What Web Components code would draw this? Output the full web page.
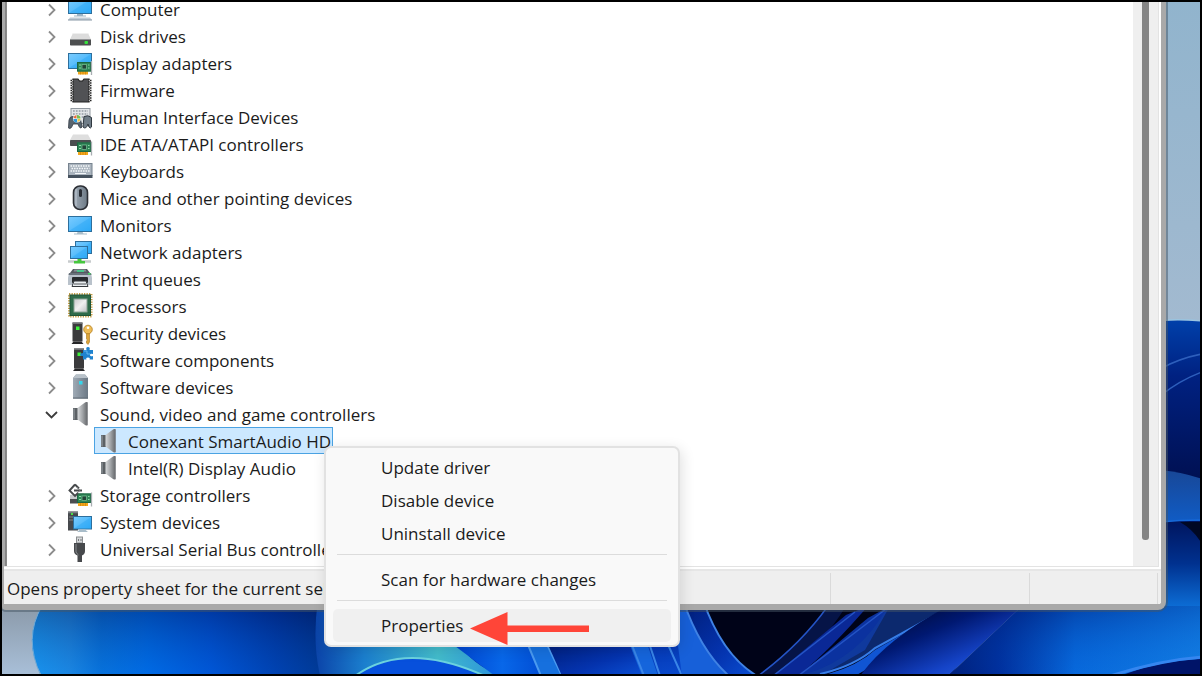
<!DOCTYPE html>
<html lang="en">
<head>
<meta charset="utf-8">
<title>Device Manager</title>
<style>
    body {
        margin: 0;
        font-family: "Open Sans", "Noto Sans", sans-serif;
        font-size: 17px;
        color: #1b1b1b;
    }
</style>
</head>
<body>
<desk-top>
    <desk-wallpaper slot="wallpaper"></desk-wallpaper>
    <app-window>
        <device-tree>
            <device-node icon="computer">Computer</device-node>
            <device-node icon="disk">Disk drives</device-node>
            <device-node icon="display">Display adapters</device-node>
            <device-node icon="firmware">Firmware</device-node>
            <device-node icon="hid">Human Interface Devices</device-node>
            <device-node icon="ide">IDE ATA/ATAPI controllers</device-node>
            <device-node icon="keyboard">Keyboards</device-node>
            <device-node icon="mouse">Mice and other pointing devices</device-node>
            <device-node icon="monitor">Monitors</device-node>
            <device-node icon="network">Network adapters</device-node>
            <device-node icon="printer">Print queues</device-node>
            <device-node icon="processor">Processors</device-node>
            <device-node icon="security">Security devices</device-node>
            <device-node icon="component">Software components</device-node>
            <device-node icon="software">Software devices</device-node>
            <device-node icon="sound" open>Sound, video and game controllers</device-node>
            <device-node icon="sound" child selected>Conexant SmartAudio HD</device-node>
            <device-node icon="sound" child>Intel(R) Display Audio</device-node>
            <device-node icon="storage">Storage controllers</device-node>
            <device-node icon="system">System devices</device-node>
            <device-node icon="usb">Universal Serial Bus controllers</device-node>
        </device-tree>
        <status-bar slot="status">Opens property sheet for the current selection.</status-bar>
    </app-window>
    <context-menu slot="menu">
        <menu-item>Update driver</menu-item>
        <menu-item>Disable device</menu-item>
        <menu-item>Uninstall device</menu-item>
        <menu-separator></menu-separator>
        <menu-item>Scan for hardware changes</menu-item>
        <menu-separator></menu-separator>
        <menu-item active>Properties<pointer-arrow slot="after"></pointer-arrow></menu-item>
    </context-menu>
</desk-top>

<script>
// Shared pieces of the device icons. Every icon is drawn on a 24 x 27 grid.
const screen = (x, y, w, h) => `
    <rect x="${x + .5}" y="${y + .5}" width="${w - 1}" height="${h - 1}" fill="url(#scr)" stroke="#2d6f9d"/>
    <path d="M${x + 1} ${y + h - 1}L${x + w - 1} ${y + 1}V${y + h - 1}Z" fill="#20a0f4" opacity=".35"/>`;

const board = (y) => `
    <path d="M10 ${y + 9}h10v3.500h-10z" fill="#f3a71c"/>
    <path d="M12.500 ${y + 9}v3.500M15 ${y + 9}v3.500M17.500 ${y + 9}v3.500" stroke="#c97c08" stroke-width=".6"/>
    <rect x="9" y="${y}" width="14" height="9.500" fill="#2f8557"/>
    <rect x="9.500" y="${y + .5}" width="13" height="8.500" fill="none" stroke="#1c6842"/>
    <rect x="14" y="${y + 2.5}" width="4.500" height="4.500" fill="#234237" stroke="#78c596" stroke-width=".7"/>
    <path d="M11 ${y + 3}h2M11 ${y + 6}h2M20 ${y + 3}h1.500M20 ${y + 6}h1.500" stroke="#8ddca5"/>
    <path d="M23.500 ${y - 1}v14" stroke="#a9aeb2" stroke-width="1.300"/>`;

const tower = (x, y, w, h) => `
    <rect x="${x}" y="${y}" width="${w}" height="${h}" fill="#3b3b3d"/>
    <path d="M${x} ${y + .7}h${w}" stroke="#77797c" stroke-width="1.400"/>
    <path d="M${x + 1} ${y + h}h${w - 2}l2 2.500h${-w - 2}z" fill="#262628"/>
    <rect x="${x + w / 2 - 1.5}" y="${y + 4}" width="3.500" height="3.500" fill="#3cf03a"/>`;

const dots = (n, fn) => Array.from({ length: n }, (_, i) => fn(i)).join('');

const ICONS = {
    computer: `
        ${screen(0, 3, 24, 16)}
        <path d="M9 19h6v1.500h3v1H6v-1h3z" fill="#9db4c4"/>
        <path d="M2 22.500h20l2 2.500H0z" fill="#c0ccd6"/><path d="M0 25h24" stroke="#8898a6"/>`,
    disk: `
        <path d="M5 11h15l3 6.500H2z" fill="#dcdcdc"/>
        <path d="M5 11h15l.5 1H4.500z" fill="#efefef"/>
        <rect x="2" y="17" width="21" height="6.500" rx=".8" fill="#4d4f50"/>
        <path d="M2 17.500h21" stroke="#929495"/>
        <rect x="16.500" y="19" width="3.500" height="3" rx="1" fill="#36e23c"/>`,
    display: `${screen(0, 4, 24, 16)}${board(13)}`,
    firmware: `
        <path d="M5 3h5l1.500 2h3L16 3h5v23H5z" fill="#515255" stroke="#222" stroke-width="1.200"/>
        ${dots(9, i => `<path d="M2.500 ${4.500 + i * 2.5}h3M20.500 ${4.500 + i * 2.5}h3" stroke="#222" stroke-width="1.500"/>
        <path d="M4 ${4.500 + i * 2.5}h1.200M20.800 ${4.500 + i * 2.5}h1.200" stroke="#eee" stroke-width=".8"/>`)}`,
    hid: `
        <rect x="3" y="5.500" width="19" height="15" fill="#e3e6e9" stroke="#9299a0"/>
        <path d="M5 8h15M5 11h15M5 14h15" stroke="#929aa2" stroke-width="1.500" stroke-dasharray="1.700 1.200"/>
        <path d="M1 17q1-4 4-3.500h5q2 0 3 5l1 5.500q-2 3-4-3H5Q3 27 .5 25z" fill="#59656f" stroke="#323a42" stroke-width=".8"/>
        <path d="M16 13.500q4-2 7.500 1V24q-1 2-2.500 0l-1-3q-2 6-5 3z" fill="#707d88" stroke="#303840"/>
        <circle cx="9" cy="15.500" r="4" fill="#eef3f5"/>
        <path d="M5.500 15a3.500 3.500 0 0 1 3-3v3.500z" fill="#ec6a3c"/>
        <path d="M9 12a3.500 3.500 0 0 1 3.500 3.500H9z" fill="#76bd4c"/>
        <path d="M5.500 16H9v3.500A3.500 3.500 0 0 1 5.500 16z" fill="#2999df"/>
        <path d="M9.500 16h3A3.500 3.500 0 0 1 9.500 19z" fill="#f1c545"/>`,
    ide: `
        <path d="M5 4.500h15l3 5.500H2z" fill="#dedede"/>
        <rect x="2" y="10" width="21" height="6" rx=".8" fill="#4b4e50"/>
        ${board(12.5)}`,
    keyboard: `
        <rect x=".5" y="6.500" width="23.500" height="12" fill="#aab4be" stroke="#77838f"/>
        <path d="M2.500 9h20M3.500 11.500h18M2.500 14h20" stroke="#f4f7f9" stroke-width="1.600" stroke-dasharray="1.600 .9"/>
        <path d="M7 16.500h11" stroke="#f4f7f9"/>
        <rect y="18" width="24.500" height="3" fill="#46525e"/>`,
    mouse: `
        <rect x="5.500" y="2" width="14" height="23.500" rx="6.500" fill="url(#steel)" stroke="#2c2f35" stroke-width="1.600"/>
        <path d="M8 5v17" stroke="#c6ced9" stroke-width="1.500" opacity=".6"/>
        <rect x="11" y="5" width="3" height="8" rx="1.500" fill="#292d34"/>`,
    monitor: `
        ${screen(0, 5, 24, 16)}
        <path d="M9.500 21h5l1 1.500H19v1H6v-1h3z" fill="#a9bdca"/>`,
    network: `
        ${screen(7, 3, 17, 13)}
        ${screen(2, 8, 18, 13)}
        <path d="M0 23.500h23" stroke="#c7cbcd" stroke-width="2.500"/>
        <path d="M9.500 21h4v2H17v2.500H6V23h3.500z" fill="#46c63f"/>`,
    printer: `
        <path d="M5 4h14l3 4H2z" fill="#555a60"/>
        <path d="M6.500 4.500h11l1 2h-13z" fill="#8a9198"/>
        <path d="M9 6h7" stroke="#3dd98c" stroke-width="1.600"/>
        <path d="M1 8h22l1 5v7H0v-7z" fill="#b9c2cb"/>
        <path d="M1 8h22l.5 2H.5z" fill="#69727b"/>
        <rect x="20" y="8" width="2.500" height="1.500" fill="#40df60"/>
        <rect x="4" y="12" width="16" height="6" rx="1" fill="#282b2e"/>
        <path d="M6 16h12l2 5.500H4z" fill="#e9edf0" stroke="#34383c"/>
        <path d="M6 19h12" stroke="#54585c"/>`,
    processor: `
        <rect x="1" y="2" width="22.500" height="22.500" fill="none" stroke="#c49b43" stroke-width="2" stroke-dasharray="1.300 1.200"/>
        <rect x="2" y="3" width="20.500" height="20.500" fill="#2f6b4a" stroke="#205437"/>
        <rect x="6" y="7" width="13" height="13" fill="url(#metal)" stroke="#8ea597"/>`,
    security: `
        ${tower(4.5, 3.5, 10, 19)}
        <path d="M18.500 14h3v9l-1.500 2.500-1.500-1.500v-2l1-1-1-1z" fill="#dda53a" stroke="#a8741b" stroke-width=".6"/>
        <circle cx="20" cy="10.500" r="4.300" fill="#efbd57" stroke="#b37f21" stroke-width=".8"/>
        <circle cx="20" cy="8.800" r="1.300" fill="#fff"/>`,
    component: `
        ${tower(6, 2.5, 10, 20)}
        <path d="M15 4h3.500q-1-3 1.500-3t1.500 3H25v4q-3-1-3 1t3 1v3.500h-3.500q1-2-1.500-2t-1.500 2H15V10q-3 0-3-1.500T15 7z" fill="#1f83cf"/>
        <path d="M16 5h3v3h3" fill="none" stroke="#62b7ee"/>`,
    software: `
        <path d="M8 1.500h9L20 5v20.500H5V5z" fill="#8b96a0"/>
        <path d="M8 1.500h9L20 5H5z" fill="#b8c1c9"/>
        <rect x="5" y="5" width="15" height="20.500" fill="url(#steel)"/>
        <rect x="11" y="8" width="3.500" height="3.500" fill="#35d6ec"/>
        <path d="M5 25h15" stroke="#626d77"/>`,
    sound: `
        <rect x="5" y="8" width="5" height="12" fill="#5c6165"/>
        <path d="M6 8.500v11" stroke="#93999e" stroke-width="1.200"/>
        <path d="M9.500 8L17 2.500h2.500V25H17l-7.500-5.500z" fill="url(#cone)"/>
        <path d="M17.500 2q2.500 11.500 0 23.500h2V2z" fill="#737579"/>`,
    storage: `
        <path d="M2 14l14-2v10H2z" fill="#c7cacc"/>
        <path d="M2 18h10v4.500H2z" fill="#4b4e50"/>
        ${board(12.5)}
        <path d="M7 3.500L1.500 9.500 7 15l3-3M7 3.500l4 4M6 9.500h8" fill="none" stroke="#46494b" stroke-width="1.900"/>
        <path d="M9 6l3 3.500L9 12" fill="none" stroke="#76797b"/>`,
    system: `
        <rect x="0" y="3.500" width="10" height="19" fill="#46494d"/>
        <path d="M0 4.500h10" stroke="#787c80" stroke-width="1.500"/>
        <path d="M1 9h5M1 12h5" stroke="#818589"/>
        <rect x="3" y="5" width="2" height="2" fill="#4bdf45"/>
        ${screen(5, 8, 19, 13.5)}
        <path d="M12 21.500h5l3 2.500H9z" fill="#a9bdca"/>`,
    usb: `
        <rect x="8.500" y="2" width="6" height="6" fill="#d5d7d9" stroke="#8a8d90"/>
        <path d="M10 5h1M12.500 5h1" stroke="#55585a" stroke-width="1.500"/>
        <path d="M6 8h11v8q0 3-3 4.500V27h-4.500v-6.500Q6 19 6 16z" fill="#47494c"/>
        <path d="M8 9v8q1 2 2.500 3" fill="none" stroke="#888b8e"/>`
};

class DeviceIcon extends HTMLElement {
    static observedAttributes = ['name'];

    constructor() {
        super();
        this.attachShadow({ mode: 'open' });
    }

    attributeChangedCallback() {
        this.shadowRoot.innerHTML = `
            <style>
                :host { display: block; flex: none; width: 24px; height: 27px; }
                svg { display: block; overflow: visible; }
            </style>
            <svg width="24" height="27" viewBox="0 0 24 27" aria-hidden="true">
                <defs>
                    <linearGradient id="scr" x2="1" y2="1"><stop stop-color="#7cccff"/><stop offset="1" stop-color="#32adf8"/></linearGradient>
                    <linearGradient id="steel"><stop stop-color="#a0abb6"/><stop offset="1" stop-color="#6c7985"/></linearGradient>
                    <linearGradient id="metal" x2="1" y2="1"><stop stop-color="#c6c8ca"/><stop offset=".5" stop-color="#f0f0f0"/><stop offset="1" stop-color="#bfc2c4"/></linearGradient>
                    <linearGradient id="cone"><stop stop-color="#d8dadc"/><stop offset=".5" stop-color="#a2a5a8"/><stop offset="1" stop-color="#64676a"/></linearGradient>
                </defs>
                ${ICONS[this.getAttribute('name')] || ''}
            </svg>
        `;
    }
}

class DeviceNode extends HTMLElement {
    constructor() {
        super();
        this.attachShadow({ mode: 'open' });
        this.shadowRoot.innerHTML = `
            <style>
                :host { display: flex; height: 27px; padding-left: 33px; }
                :host([child]) { padding-left: 87px; }
                button {
                    width: 24px;
                    height: 27px;
                    margin-right: 2px;
                    padding: 0;
                    border: 0;
                    background: none;
                    color: #8c8c8c;
                }
                :host([open]) button { color: #3c3c3c; }
                :host([child]) button { display: none; }
                button svg { display: block; }
                .item {
                    display: flex;
                    gap: 8px;
                    padding: 0 2px;
                    line-height: 30px;
                    white-space: nowrap;
                }
                :host([selected]) .item {
                    background: #cce8ff;
                    box-shadow: inset 0 0 0 1px #4ba3e3;
                }
            </style>
            <button type="button" aria-label="Expand">
                <svg width="24" height="27" viewBox="0 0 24 27" fill="none" stroke="currentColor" stroke-width="1.800">
                    <path d="M9 9.500L14.500 15 9 20.500"/>
                </svg>
            </button>
            <div class="item"><device-icon></device-icon><span><slot></slot></span></div>
        `;
    }

    connectedCallback() {
        this.setAttribute('role', 'treeitem');
        this.shadowRoot.querySelector('device-icon').setAttribute('name', this.getAttribute('icon'));
        if (this.hasAttribute('open')) {
            this.shadowRoot.querySelector('button path').setAttribute('d', 'M6 12l5.500 5.500L17 12');
            this.shadowRoot.querySelector('button').setAttribute('aria-label', 'Collapse');
        }
    }
}

class DeviceTree extends HTMLElement {
    constructor() {
        super();
        this.attachShadow({ mode: 'open' });
        // scrolled down a little, so the first row is cut by the top edge
        this.shadowRoot.innerHTML = `
            <style>
                :host { display: block; margin-top: -7px; }
            </style>
            <div role="tree" aria-label="Devices"><slot></slot></div>
        `;
    }
}

class StatusBar extends HTMLElement {
    constructor() {
        super();
        this.attachShadow({ mode: 'open' });
        this.shadowRoot.innerHTML = `
            <style>
                :host {
                    display: grid;
                    grid-template-columns: 1fr 199px 128px;
                    height: 33px;
                    padding-right: 3px;
                    border-top: 2px solid #e6e6e6;
                    background: #efefef;
                    line-height: 32px;
                    white-space: nowrap;
                }
                div { border-right: 1px solid #dadada; margin-top: 2px; }
                .text { padding-left: 3px; }
            </style>
            <div class="text"><slot></slot></div><div></div><div></div>
        `;
    }
}

class AppWindow extends HTMLElement {
    constructor() {
        super();
        this.attachShadow({ mode: 'open' });
        this.shadowRoot.innerHTML = `
            <style>
                :host {
                    display: flex;
                    flex-direction: column;
                    border: solid #a9a9a9;
                    border-width: 0 5px 6px 2px;
                    border-radius: 0 0 8px 4px;
                    box-shadow: 0 0 0 2px rgba(70, 85, 100, .5);
                    background: #fff;
                    position: relative;
                    min-height: 0;
                    overflow: hidden;
                }
                .pane {
                    display: flex;
                    flex: 1;
                    min-height: 0;
                    margin-right: 2px;
                    border: solid #e3e3e3;
                    border-width: 0 1px 1px 0;
                    overflow: hidden;
                }
                .edge { width: 3px; background: linear-gradient(90deg, #bbb, #777 60%, #999); }
                .view { flex: 1; min-width: 0; }
                .scroll {
                    display: flex;
                    width: 24px;
                    justify-content: center;
                    padding-bottom: 26px;
                    padding-right: 1px;
                    background: #efefef;
                }
                .thumb { width: 7px; border-radius: 0 0 3px 3px; background: #858585; }
                ::slotted([slot=status]) { margin-top: 2px; }
            </style>
            <div class="pane">
                <div class="edge"></div>
                <div class="view"><slot></slot></div>
                <div class="scroll"><div class="thumb"></div></div>
            </div>
            <slot name="status"></slot>
        `;
    }
}

class MenuItem extends HTMLElement {
    constructor() {
        super();
        this.attachShadow({ mode: 'open' });
        this.shadowRoot.innerHTML = `
            <style>
                :host { display: block; }
                button {
                    display: flex;
                    gap: 7px;
                    width: 100%;
                    height: 33px;
                    padding: 0 0 0 48px;
                    border: 0;
                    border-radius: 5px;
                    background: none;
                    color: inherit;
                    font: inherit;
                    line-height: 34px;
                    text-align: left;
                    white-space: nowrap;
                }
                :host([active]) button { background: #f0f0f0; }
            </style>
            <button type="button" role="menuitem"><span><slot></slot></span><slot name="after"></slot></button>
        `;
    }
}

class MenuSeparator extends HTMLElement {
    constructor() {
        super();
        this.attachShadow({ mode: 'open' });
        this.shadowRoot.innerHTML = `
            <style>
                :host { display: block; height: 1px; margin: 4px 4px 8px; background: #dcdcdc; }
            </style>
        `;
    }
}

class ContextMenu extends HTMLElement {
    constructor() {
        super();
        this.attachShadow({ mode: 'open' });
        this.shadowRoot.innerHTML = `
            <style>
                :host {
                    display: block;
                    box-sizing: border-box;
                    width: 356px;
                    padding: 3px 7px;
                    border: 2px solid #e2e2e2;
                    border-radius: 7px;
                    background: #f9f9f9;
                    box-shadow: 2px 3px 14px rgba(0, 0, 0, .12);
                }
            </style>
            <div role="menu"><slot></slot></div>
        `;
    }
}

class PointerArrow extends HTMLElement {
    constructor() {
        super();
        this.attachShadow({ mode: 'open' });
        this.shadowRoot.innerHTML = `
            <style>
                :host { display: block; }
                svg { display: block; overflow: visible; }
            </style>
            <svg width="119" height="33" viewBox="0 0 119 33" aria-hidden="true">
                <path d="M0 19.500L37.500 3v13.500H119V23H37.500v13z" fill="#ff4538"/>
            </svg>
        `;
    }
}

class DeskWallpaper extends HTMLElement {
    constructor() {
        super();
        this.attachShadow({ mode: 'open' });
        this.shadowRoot.innerHTML = `
            <style>
                :host { display: block; }
                svg { display: block; width: 100%; height: 100%; }
            </style>
            <svg viewBox="0 0 1202 676" preserveAspectRatio="none" aria-hidden="true">
                <defs>
                    <linearGradient id="sky" x2="0" y2="1"><stop stop-color="#91b4cd"/><stop offset=".5" stop-color="#a3bad0"/><stop offset=".9" stop-color="#8c9bab"/><stop offset="1" stop-color="#a9c0d9"/></linearGradient>
                    <linearGradient id="left"><stop stop-color="#2196e8"/><stop offset=".13" stop-color="#2584d8"/><stop offset=".24" stop-color="#0a68cf"/><stop offset=".4" stop-color="#005edb"/><stop offset=".62" stop-color="#0042c8"/><stop offset=".85" stop-color="#002694"/><stop offset="1" stop-color="#001b70"/></linearGradient>
                    <linearGradient id="glow" x2="0" y2="1"><stop offset=".1" stop-color="#002a70" stop-opacity=".45"/><stop offset="1" stop-color="#008cff" stop-opacity=".28"/></linearGradient>
                    <linearGradient id="teal"><stop stop-color="#0b43a8"/><stop offset=".2" stop-color="#1b7fce"/><stop offset=".5" stop-color="#43bccb"/><stop offset=".75" stop-color="#2a91dc"/><stop offset="1" stop-color="#0448c4"/></linearGradient>
                    <linearGradient id="blue"><stop stop-color="#0044cf"/><stop offset=".5" stop-color="#0867e9"/><stop offset="1" stop-color="#0048cf"/></linearGradient>
                    <linearGradient id="fold" x2="1" y2="1"><stop stop-color="#001c75"/><stop offset=".6" stop-color="#0433ae"/><stop offset="1" stop-color="#0a4fd4"/></linearGradient>
                    <linearGradient id="ribbon" x1="0" y1="0" x2="1" y2="1"><stop stop-color="#000318"/><stop offset=".4" stop-color="#001871"/><stop offset=".7" stop-color="#1544c8"/><stop offset="1" stop-color="#326fe9"/></linearGradient>
                    <linearGradient id="right"><stop stop-color="#001368"/><stop offset=".2" stop-color="#002996"/><stop offset=".5" stop-color="#0869dc"/><stop offset="1" stop-color="#1179df"/></linearGradient>
                    <linearGradient id="shade" x2=".6" y2="1"><stop stop-color="#001468" stop-opacity=".8"/><stop offset="1" stop-color="#0060d8" stop-opacity="0"/></linearGradient>
                    <linearGradient id="petal" x2="0" y2="1"><stop stop-color="#0040aa"/><stop offset=".35" stop-color="#002181"/><stop offset="1" stop-color="#001052"/></linearGradient>
                    <linearGradient id="arc" x2="0" y2="1"><stop stop-color="#184797"/><stop offset="1" stop-color="#105cc5"/></linearGradient>
                    <linearGradient id="low" x2="0" y2="1"><stop stop-color="#00155e"/><stop offset=".5" stop-color="#00318f"/><stop offset="1" stop-color="#0c6cd4"/></linearGradient>
                </defs>
                <rect width="1202" height="676" fill="url(#sky)"/>

                <path d="M46 600Q20 637 42 676H320V600z" fill="url(#left)"/>
                <path d="M46 600Q20 637 42 676H320V600z" fill="url(#glow)"/>
                <path d="M42 606Q23 638 41 676" fill="none" stroke="#6fa9d5"/>
                <path d="M318 600Q312 640 320 676H560L520 600z" fill="url(#teal)"/>
                <path d="M455 640Q480 674 510 676H720V600H455z" fill="url(#fold)"/>
                <path d="M355 676Q405 640 485 676z" fill="#0750dc"/>
                <path d="M355 676Q405 640 485 676" fill="none" stroke="#6bd2de" stroke-width="2"/>
                <path d="M455 646L495 676H550L526 640z" fill="url(#blue)"/>
                <path d="M526 640L541 676H563L545 640z" fill="#1670de"/>
                <path d="M526 640L541 676M545 640L562 676" stroke="#4a9af0" stroke-width="2"/>
                <path d="M562 676L546 640H628L642 676z" fill="url(#fold)"/>
                <path d="M628 640L642 676H658L646 640z" fill="#1565dc"/>
                <path d="M630 640L644 676M648 640L660 676M666 640L682 676" stroke="#3a86e8" stroke-width="2"/>

                <path d="M683 600H1006L950 676H729z" fill="#000318"/>
                <path d="M672 600h11Q700 650 729 676H682z" fill="#1760d9"/>
                <path d="M683 600Q700 650 729 676H757Q722 655 703 600z" fill="url(#fold)"/>
                <path d="M683 600Q700 650 729 676M703 600Q722 655 757 676" fill="none" stroke="#3f82e4" stroke-width="2"/>
                <path d="M758 676Q800 645 828 606L846 606Q820 650 773 676z" fill="#061447"/>
                <path d="M773 676L846 615 868 606Q830 650 798 676z" fill="#0a2896"/>
                <path d="M798 676L868 618 890 606 865 650 820 676z" fill="#0b329f"/>
                <path d="M758 676Q800 645 828 606M773 676L855 612M798 676L886 609" fill="none" stroke="#2454c5" stroke-width="1.500"/>
                <path d="M888 606h64L875 650Q848 668 820 676H798Q858 662 888 606z" fill="#123d9c" opacity=".65"/>
                <path d="M820 676Q855 668 875 650L952 606 900 650 855 676z" fill="#1055d4"/>
                <path d="M820 674Q855 666 875 648L948 608" fill="none" stroke="#367de8" stroke-width="2"/>
                <path d="M860 676Q885 640 948 606H1022L948 676z" fill="url(#ribbon)"/>
                <path d="M1022 606L948 676H1202V600z" fill="url(#right)"/>
                <path d="M1022 606L948 676H1202V600z" fill="url(#shade)"/>
                <path d="M1120 676Q1160 660 1202 659V676z" fill="#001468"/>
                <path d="M1110 676Q1160 660 1202 657" fill="none" stroke="#3586f0" stroke-width="3"/>

                <path d="M1160 321Q1180 319 1202 321V480H1160z" fill="url(#petal)"/>
                <path d="M1160 320.500Q1180 319 1202 321" fill="none" stroke="#9ac4e0" stroke-width="1.500"/>
                <path d="M1160 369Q1180 358 1202 354M1160 396Q1180 380 1202 372" fill="none" stroke="#2d5fbc" stroke-width="1.500"/>
                <path d="M1160 470Q1182 472 1202 479V522H1160z" fill="url(#arc)"/>
                <path d="M1160 522Q1180 520 1202 521V606H1160z" fill="url(#low)"/>
                <path d="M1160 522Q1180 520 1202 520" fill="none" stroke="#1769d8" stroke-width="1.500"/>
                <path d="M1180 522h22v22q-8-14-22-22z" fill="#000824"/>
            </svg>
        `;
    }
}

class DeskTop extends HTMLElement {
    constructor() {
        super();
        this.attachShadow({ mode: 'open' });
        this.shadowRoot.innerHTML = `
            <style>
                :host {
                    display: grid;
                    grid-template: minmax(0, 1fr) / minmax(0, 1fr);
                    box-sizing: border-box;
                    position: relative;
                    height: 100vh;
                    padding: 0 34px 64px 0;
                    border: 2px solid #000;
                    overflow: hidden;
                }
                ::slotted([slot=wallpaper]) { position: absolute; inset: -2px; }
                ::slotted([slot=menu]) { position: absolute; left: 322px; top: 444px; }
            </style>
            <slot name="wallpaper"></slot>
            <slot></slot>
            <slot name="menu"></slot>
        `;
    }
}

customElements.define('device-icon', DeviceIcon);
customElements.define('device-node', DeviceNode);
customElements.define('device-tree', DeviceTree);
customElements.define('status-bar', StatusBar);
customElements.define('app-window', AppWindow);
customElements.define('pointer-arrow', PointerArrow);
customElements.define('menu-item', MenuItem);
customElements.define('menu-separator', MenuSeparator);
customElements.define('context-menu', ContextMenu);
customElements.define('desk-wallpaper', DeskWallpaper);
customElements.define('desk-top', DeskTop);
</script>
</body>
</html>
